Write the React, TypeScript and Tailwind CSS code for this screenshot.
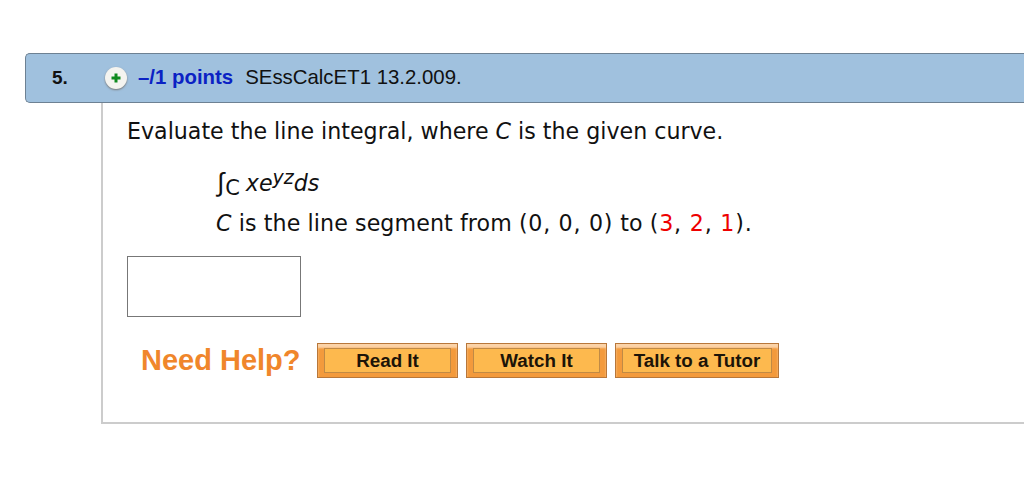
import React from 'react';

const sans = "font-['Liberation_Sans',Arial,sans-serif]";
const verdana = "font-['DejaVu_Sans',Verdana,sans-serif]";

function HelpButton({ label, width }: { label: string; width: string }) {
  return (
    <div className={`${width} h-[35px] border border-[#b8773a] bg-[#f39a3c] px-[6px] pt-[4px] pb-[4px] shadow-[inset_0_4px_2px_#fbd3a8]`}>
      <div className="flex h-full items-center justify-center border border-[#c08a45] bg-[#fdb94e] pt-[1px] text-[18.8px] font-bold leading-none text-[#1c1408]">
        {label}
      </div>
    </div>
  );
}

export default function App() {
  return (
    <div className={`h-[498px] w-[1024px] overflow-hidden bg-white pt-[53px] ${sans}`}>
      {/* Question header */}
      <div className="ml-[25px] flex h-[50px] items-center rounded-l-[5px] border-y border-l border-[#6d8193] bg-[#a0c1de] pb-[1px] text-[20.4px] leading-none text-[#111]">
        <span className="ml-[26px] w-[53px] text-[19px] font-bold">5.</span>
        <span className="flex h-[22px] w-[22px] items-center justify-center rounded-full bg-[#f4f4f0] shadow-[0_1px_2px_#777777]">
          <svg width="12" height="12" viewBox="0 0 12 12">
            <path d="M6 1.5v9M1.5 6h9" stroke="#0f8a1f" strokeWidth="3" />
          </svg>
        </span>
        <span className="ml-[11px] font-bold text-[#0b22c4]">–/1 points</span>
        <span className="ml-[12px]">SEssCalcET1 13.2.009.</span>
      </div>

      {/* Question body */}
      <div className={`ml-[101px] h-[321px] border-b-2 border-l-2 border-[#cccccc] pl-[24px] text-[#111] ${verdana}`}>
        <p className="pt-[14px] text-[22.15px] leading-[28px]">
          Evaluate the line integral, where <i>C</i> is the given curve.
        </p>
        <div className="ml-[89px]">
          <p className="mt-[22px] flex h-[30px] items-baseline text-[22.15px] leading-[30px]">
            <span className="ml-[1px] text-[26px] font-light">∫</span>
            <span className="relative top-[4px] ml-[1px] text-[21px]">C</span>
            <i className="ml-[6px]">xe</i>
            <i className="relative top-[-7px] text-[19px]">yz</i>
            <i>ds</i>
          </p>
          <p className="mt-[12px] text-[22.15px] leading-[28px] tracking-[0.1px]">
            <i>C</i> is the line segment from <span className="tracking-[0.7px]">(0, 0, 0)</span> to <span className="tracking-[0.8px]">(<span className="text-[#ee0000]">3</span>, <span className="text-[#ee0000]">2</span>, <span className="text-[#ee0000]">1</span>).</span>
          </p>
        </div>
        <div className="mt-[19px] h-[61px] w-[174px] border border-[#777777] bg-white" />
        <div className={`mt-[26px] flex items-center ${sans}`}>
          <span className="ml-[14px] w-[176px] text-[29px] font-bold leading-none text-[#f0862b]">Need Help?</span>
          <HelpButton label="Read It" width="w-[141px]" />
          <div className="w-[8px]" />
          <HelpButton label="Watch It" width="w-[141px]" />
          <div className="w-[8px]" />
          <HelpButton label="Talk to a Tutor" width="w-[164px]" />
        </div>
      </div>
    </div>
  );
}
